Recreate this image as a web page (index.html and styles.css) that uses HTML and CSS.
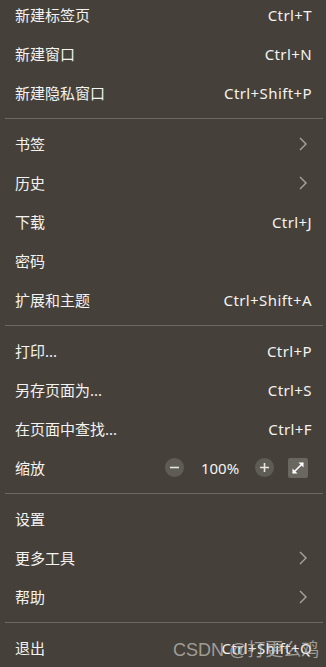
FILE: index.html
```html
<!DOCTYPE html>
<html lang="zh-CN">
<head>
<meta charset="utf-8">
<link rel="stylesheet" href="styles.css">
</head>
<body>
<div class="menu">
  <div class="row"><span class="label">新建标签页</span><span class="key">Ctrl+T</span></div>
  <div class="row"><span class="label">新建窗口</span><span class="key">Ctrl+N</span></div>
  <div class="row"><span class="label">新建隐私窗口</span><span class="key">Ctrl+Shift+P</span></div>
  <div class="sep"></div>
  <div class="row"><span class="label">书签</span><svg class="chev" width="10" height="14" viewBox="0 0 10 14"><path d="M2 1 L8 7 L2 13" fill="none" stroke="#a8a5a0" stroke-width="1.4"/></svg></div>
  <div class="row"><span class="label">历史</span><svg class="chev" width="10" height="14" viewBox="0 0 10 14"><path d="M2 1 L8 7 L2 13" fill="none" stroke="#a8a5a0" stroke-width="1.4"/></svg></div>
  <div class="row"><span class="label">下载</span><span class="key">Ctrl+J</span></div>
  <div class="row"><span class="label">密码</span></div>
  <div class="row"><span class="label">扩展和主题</span><span class="key">Ctrl+Shift+A</span></div>
  <div class="sep"></div>
  <div class="row"><span class="label">打印...</span><span class="key">Ctrl+P</span></div>
  <div class="row"><span class="label">另存页面为...</span><span class="key">Ctrl+S</span></div>
  <div class="row"><span class="label">在页面中查找...</span><span class="key">Ctrl+F</span></div>
  <div class="row"><span class="label">缩放</span>
    <div class="zoom">
      <span class="circ"><svg width="19" height="19" viewBox="0 0 19 19"><path d="M5 9.5 H14" stroke="#e8e6e3" stroke-width="1.6"/></svg></span>
      <span class="pct">100%</span>
      <span class="circ"><svg width="19" height="19" viewBox="0 0 19 19"><path d="M5 9.5 H14 M9.5 5 V14" stroke="#e8e6e3" stroke-width="1.6"/></svg></span>
      <span class="full"><svg width="20" height="20" viewBox="0 0 20 20"><path d="M5 15 L15 5" stroke="#fff" stroke-width="1.6"/><path d="M10.5 4.5 H15.5 V9.5 Z" fill="#fff"/><path d="M4.5 10.5 V15.5 H9.5 Z" fill="#fff"/></svg></span>
    </div>
  </div>
  <div class="sep"></div>
  <div class="row"><span class="label">设置</span></div>
  <div class="row"><span class="label">更多工具</span><svg class="chev" width="10" height="14" viewBox="0 0 10 14"><path d="M2 1 L8 7 L2 13" fill="none" stroke="#a8a5a0" stroke-width="1.4"/></svg></div>
  <div class="row"><span class="label">帮助</span><svg class="chev" width="10" height="14" viewBox="0 0 10 14"><path d="M2 1 L8 7 L2 13" fill="none" stroke="#a8a5a0" stroke-width="1.4"/></svg></div>
  <div class="sep"></div>
  <div class="row last"><span class="label">退出</span><span class="key">Ctrl+Shift+Q</span><span class="mark">CSDN @打更么鸡</span></div>
</div>
</body>
</html>
```
FILE: styles.css
```css
html, body {
  margin: 0;
  padding: 0;
  background: #45413a;
  overflow: hidden;
}
.menu {
  margin-top: -5px;
  font-family: "Noto Sans", "Noto Sans CJK SC", sans-serif;
  font-size: 15px;
  color: #f4f3f1;
}
.row {
  height: 39px;
  display: flex;
  align-items: center;
  justify-content: space-between;
  padding: 0 14px 0 15px;
  position: relative;
}
.label {
  white-space: nowrap;
}
.key {
  white-space: nowrap;
  letter-spacing: 0.4px;
}
.chev {
  display: block;
  margin-right: 4px;
}
.sep {
  height: 1px;
  background: #6d6a64;
  margin: 5.5px 3px 5.5px 5px;
}
.zoom {
  display: flex;
  align-items: center;
  margin-right: 4px;
}
.circ {
  width: 19px;
  height: 19px;
  border-radius: 50%;
  background: #5f5c56;
  display: flex;
}
.pct {
  width: 40px;
  margin: 0 15px 0 16px;
  text-align: center;
}
.full {
  width: 20px;
  height: 20px;
  margin-left: 14px;
  border-radius: 2px;
  background: #6a6761;
  display: flex;
}
.mark {
  position: absolute;
  left: 173px;
  top: 50%;
  transform: translateY(-50%);
  font-family: "Liberation Sans", "Noto Sans CJK SC", sans-serif;
  font-size: 18px;
  color: rgba(200, 198, 194, 0.7);
  white-space: nowrap;
}
```
